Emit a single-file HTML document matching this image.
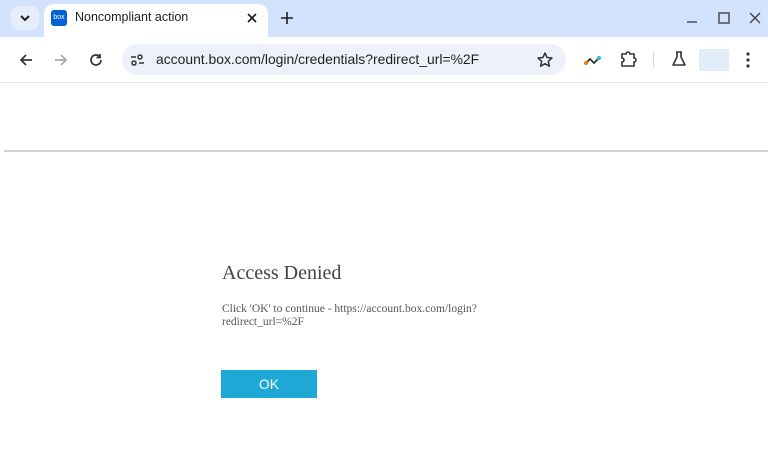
<!DOCTYPE html>
<html><head><style>
body{margin:0;width:768px;height:466px;overflow:hidden;background:#fff;font-family:"Liberation Sans",sans-serif;position:relative}
.a{position:absolute}
</style></head><body>
<div class="a" style="left:0;top:0;width:768px;height:37px;background:#d3e3fd"></div>
<div class="a" style="left:11px;top:6px;width:28px;height:24px;border-radius:8px;background:#e6eefc"></div>
<svg class="a" style="left:18px;top:11px" width="14" height="14"><path d="M3 5l4 4 4-4" stroke="#1f1f1f" stroke-width="2" fill="none"/></svg>
<div class="a" style="left:44px;top:4px;width:224px;height:34px;background:#fff;border-radius:10px 10px 0 0"></div>
<div class="a" style="left:51px;top:10px;width:16px;height:16px;background:#0061d5;border-radius:3px;color:#fff;font-size:7px;line-height:16px;text-align:center">box</div>
<div class="a" style="left:75px;top:10px;font-size:12.5px;color:#1f1f1f">Noncompliant action</div>
<svg class="a" style="left:246px;top:12px" width="12" height="12"><path d="M2 2l8 8M10 2l-8 8" stroke="#1f1f1f" stroke-width="1.7"/></svg>
<svg class="a" style="left:280px;top:11px" width="14" height="14"><path d="M7 1v12M1 7h12" stroke="#1f1f1f" stroke-width="1.6"/></svg>
<svg class="a" style="left:684px;top:10px" width="80" height="16"><path d="M3 12h10" stroke="#444" stroke-width="1.4"/><rect x="35" y="3" width="10" height="10" fill="none" stroke="#444" stroke-width="1.4"/><path d="M66 3l10 10M76 3l-10 10" stroke="#444" stroke-width="1.4"/></svg>
<div class="a" style="left:0;top:37px;width:768px;height:45px;background:#fff;border-bottom:1px solid #e8e8e8"></div>
<svg class="a" style="left:18px;top:52px" width="16" height="16"><path d="M14 8H3M8 3L3 8l5 5" stroke="#333" stroke-width="1.7" fill="none"/></svg>
<svg class="a" style="left:53px;top:52px" width="16" height="16"><path d="M2 8h11M8 3l5 5-5 5" stroke="#aaa" stroke-width="1.7" fill="none"/></svg>
<svg class="a" style="left:88px;top:52px" width="16" height="16"><path d="M13 8a5 5 0 1 1-1.5-3.6M12 2v3.5H8.5" stroke="#333" stroke-width="1.7" fill="none"/></svg>
<div class="a" style="left:122px;top:44px;width:444px;height:31px;background:#edf2fa;border-radius:16px"></div>
<svg class="a" style="left:128px;top:51px" width="18" height="18"><path d="M3 6h5M11 12h5" stroke="#333" stroke-width="1.6"/><circle cx="12" cy="6" r="2" fill="none" stroke="#333" stroke-width="1.5"/><circle cx="6" cy="12" r="2" fill="none" stroke="#333" stroke-width="1.5"/></svg>
<div class="a" style="left:156px;top:51px;font-size:13.9px;color:#1f1f1f">account.box.com/login/credentials?redirect_url=%2F</div>
<svg class="a" style="left:536px;top:51px" width="18" height="18"><path d="M9 2l2.1 4.5 4.9.5-3.7 3.3 1.1 4.9L9 12.7 4.6 15.2l1.1-4.9L2 7l4.9-.5z" fill="none" stroke="#333" stroke-width="1.5" stroke-linejoin="round"/></svg>
<svg class="a" style="left:583px;top:53px" width="20" height="14"><path d="M3 10l4-4 4 4 5-5" stroke="#333" stroke-width="1.8" fill="none"/><circle cx="3" cy="10" r="2" fill="#f57c00"/><circle cx="16" cy="5" r="2" fill="#29b6f6"/></svg>
<svg class="a" style="left:619px;top:50px" width="18" height="18"><path d="M3 4h4a2 2 0 0 1 4 0h4v4a2 2 0 0 1 0 4v4H3v-4a2 2 0 0 0 0-4z" fill="none" stroke="#333" stroke-width="1.6"/></svg>
<div class="a" style="left:653px;top:52px;width:1px;height:15px;background:#c9d8f0"></div>
<svg class="a" style="left:670px;top:50px" width="18" height="18"><path d="M6 2h6M7 2v5L3 15h12l-4-8V2" fill="none" stroke="#333" stroke-width="1.6" stroke-linejoin="round"/></svg>
<div class="a" style="left:699px;top:49px;width:30px;height:22px;background:#e3edf9;border-radius:2px"></div>
<svg class="a" style="left:744px;top:51px" width="8" height="18"><circle cx="4" cy="3" r="1.6" fill="#333"/><circle cx="4" cy="9" r="1.6" fill="#333"/><circle cx="4" cy="15" r="1.6" fill="#333"/></svg>
<div class="a" style="left:4px;top:150px;width:764px;height:2px;background:#d0d0d0"></div>
<div class="a" style="left:222px;top:262px;font-family:'Liberation Serif',serif;font-size:20px;color:#444">Access Denied</div>
<div class="a" style="left:222px;top:303px;width:290px;font-family:'Liberation Serif',serif;font-size:11.5px;line-height:13px;color:#555">Click 'OK' to continue - https://account.box.com/login?<br>redirect_url=%2F</div>
<div class="a" style="left:221px;top:370px;width:96px;height:28px;background:#1ea8d6;color:#fff;font-size:14px;line-height:28px;text-align:center">OK</div>
</body></html>
